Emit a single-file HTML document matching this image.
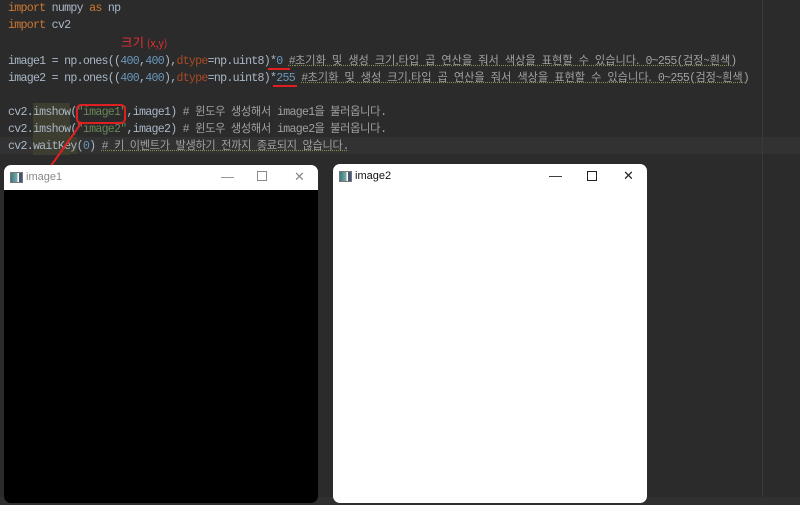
<!DOCTYPE html>
<html><head><meta charset="utf-8"><style>
body{margin:0;width:800px;height:505px;background:#2b2b2b;overflow:hidden;position:relative;font-family:"Liberation Mono","Noto Sans CJK KR",monospace;}
.l{position:absolute;left:8px;font-size:11.6px;letter-spacing:-0.72px;line-height:17px;color:#a9b7c6;white-space:pre;}
.k{color:#cc7832}.n{color:#6897bb}.s{color:#6a8759}.p{color:#aa4926}.c{color:#a0a0a0;text-decoration:underline dotted #8a8a50}
.ko{font-family:"Noto Sans CJK KR",sans-serif;font-size:11.2px;letter-spacing:-0.3px;word-spacing:3.5px}
.ko2{letter-spacing:0px}
.hl{position:absolute;background:#3d3d30}
.win{position:absolute;border-radius:7px;overflow:hidden;background:#fff}
.tb{height:25px;position:relative;font-family:"Liberation Sans",sans-serif;font-size:11px;}
.ic{position:absolute;left:6px;top:7px;width:11px;height:9px;background:linear-gradient(90deg,#3b7a8a,#7fb0a0 60%,#fff 60%,#fff 75%,#457 75%);border:1px solid #777}
.tt{position:absolute;left:22px;top:6px}
.bt{position:absolute;top:4px;font-size:13px;color:#222}
</style></head><body>
<div style="position:absolute;left:0;top:137px;width:800px;height:17px;background:#323232"></div>
<div style="position:absolute;left:762px;top:0;width:1px;height:505px;background:#3a3a3a"></div>
<div style="position:absolute;left:0;top:497px;width:800px;height:8px;background:#303030"></div>
<div class="hl" style="left:33px;top:103px;width:37px;height:52px"></div>
<div class="hl" style="left:70px;top:137px;width:7px;height:17px"></div>
<div class="l" style="top:0"><span class="k">import</span> numpy <span class="k">as</span> np</div>
<div class="l" style="top:17px"><span class="k">import</span> cv2</div>
<div style="position:absolute;left:121px;top:32px;color:#e53030;font-family:'Noto Sans CJK KR',sans-serif;font-size:12.5px">크기 <span style="font-size:10.5px">(x,y)</span></div>
<div class="l" style="top:52px">image1 = np.ones((<span class="n">400</span>,<span class="n">400</span>),<span class="p">dtype</span>=np.uint8)*<span class="n">0</span> <span class="c">#<span class="ko ko2">초기화 및 생성 크기,타입 곱 연산을 줘서 색상을 표현할 수 있습니다.</span> 0~255(<span class="ko ko2">검정~흰색</span>)</span></div>
<div class="l" style="top:69px">image2 = np.ones((<span class="n">400</span>,<span class="n">400</span>),<span class="p">dtype</span>=np.uint8)*<span class="n">255</span> <span class="c">#<span class="ko ko2">초기화 및 생성 크기,타입 곱 연산을 줘서 색상을 표현할 수 있습니다.</span> 0~255(<span class="ko ko2">검정~흰색</span>)</span></div>
<div class="l" style="top:103px">cv2.imshow(<span class="s">"image1"</span>,image1) <span class="c" style="text-decoration:none"># <span class="ko">윈도우 생성해서</span> image1<span class="ko">을 불러옵니다</span>.</span></div>
<div class="l" style="top:120px">cv2.imshow(<span class="s">"image2"</span>,image2) <span class="c" style="text-decoration:none"># <span class="ko">윈도우 생성해서</span> image2<span class="ko">을 불러옵니다</span>.</span></div>
<div class="l" style="top:137px">cv2.waitKey(<span class="n">0</span>) <span class="c"># <span class="ko">키 이벤트가 발생하기 전까지 종료되지 않습니다</span>.</span></div>
<div style="position:absolute;left:268px;top:68px;width:22px;height:2px;background:#e02020"></div>
<div style="position:absolute;left:273px;top:85px;width:24px;height:2px;background:#e02020"></div>
<div style="position:absolute;left:76px;top:104px;width:46px;height:16px;border:2px solid #e02020;border-radius:5px"></div>
<svg style="position:absolute;left:0;top:0" width="800" height="505"><line x1="82" y1="122" x2="48" y2="170" stroke="#e02020" stroke-width="2"/></svg>
<div class="win" style="left:4px;top:165px;width:314px;height:338px;background:#000">
 <div class="tb" style="background:#fff;color:#888"><div class="ic"></div><div class="tt">image1</div>
 <div class="bt" style="left:217px;color:#888">—</div><div class="bt" style="left:253px;top:6px;width:8px;height:8px;border:1px solid #888"></div><div class="bt" style="left:290px;color:#888">✕</div></div>
</div>
<div class="win" style="left:333px;top:164px;width:314px;height:339px">
 <div class="tb" style="color:#111"><div class="ic"></div><div class="tt">image2</div>
 <div class="bt" style="left:216px">—</div><div class="bt" style="left:254px;top:7px;width:8px;height:8px;border:1px solid #222"></div><div class="bt" style="left:290px">✕</div></div>
</div>
</body></html>
